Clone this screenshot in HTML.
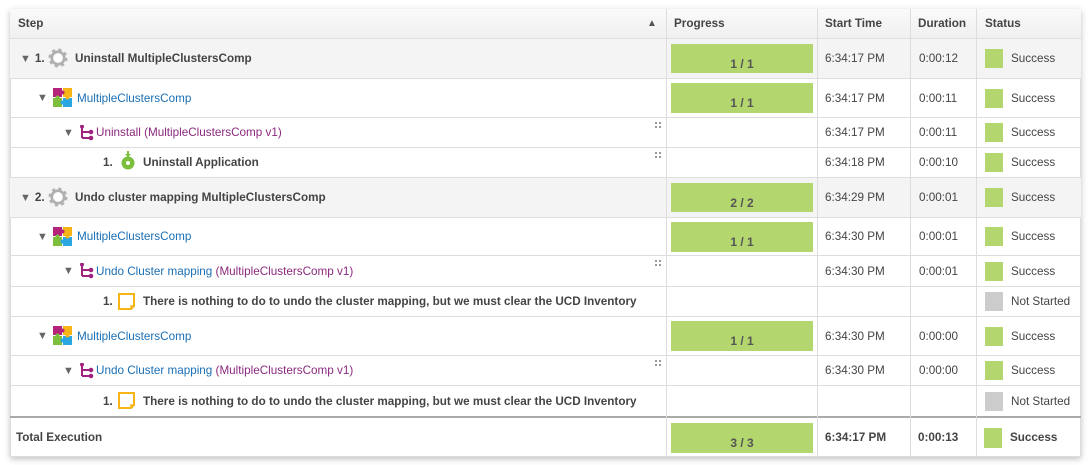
<!DOCTYPE html>
<html><head><meta charset="utf-8"><style>
*{margin:0;padding:0;box-sizing:border-box}
body{width:1090px;height:465px;background:#fff;font-family:"Liberation Sans",Arial,sans-serif;font-size:11.7px;color:#444;position:relative;overflow:hidden}
#t{position:absolute;left:10px;top:9px;width:1071px;height:448px;border:1px solid #ddd;box-shadow:0 2px 6px rgba(0,0,0,.25);background:#fff}
.r{position:absolute;left:10px;width:1071px;border-bottom:1px solid #ddd}
.g{background:#f4f4f4}
.c{position:absolute;top:0;height:100%;display:flex;align-items:center;white-space:nowrap}
.vl{position:absolute;top:9px;width:1px;height:448px;background:#ddd}
.b{font-weight:bold}
.pb{position:absolute;left:661px;width:142px;background:#b3d66f;text-align:center;font-weight:bold;color:#555;font-size:12px}
.sq{width:18px;height:19px;background:#b3d66f;margin-right:8px;display:inline-block}
.ns{background:#ccc}
.tri{font-size:11px;color:#666;margin-right:4px}
.blue{color:#1a6fb5}.pur{color:#8b2a7f}
.grip{position:absolute;left:645px;top:4px;width:6px;height:6px}
.grip i{position:absolute;width:2px;height:2px;background:#999}
</style></head><body>
<div id="t"></div>
<div class="r" style="top:9px;height:30px;background:linear-gradient(#fafafa,#f0f0f0)">
 <div class="c b" style="left:8px">Step</div>
 <div class="c" style="left:637px;font-size:10px;color:#555">▲</div>
 <div class="c b" style="left:664px">Progress</div>
 <div class="c b" style="left:815px">Start Time</div>
 <div class="c b" style="left:908px">Duration</div>
 <div class="c b" style="left:975px">Status</div>
</div>

<svg width="0" height="0" style="position:absolute">
<defs>
<g id="gear"><circle cx="10" cy="10" r="8" fill="none" stroke="#b0b0b0" stroke-width="3" stroke-dasharray="3 3.3"/><circle cx="10" cy="10" r="6.3" fill="none" stroke="#b0b0b0" stroke-width="2.6"/><circle cx="10" cy="10" r="4.2" fill="#fff"/></g>
<g id="puz"><rect x="0" y="0" width="9" height="9" fill="#b5227a"/><rect x="10" y="0" width="9" height="9" fill="#f6b417"/><rect x="0" y="10" width="9" height="9" fill="#7dbe3c"/><rect x="10" y="10" width="9" height="9" fill="#2aa7e0"/><circle cx="9.5" cy="4.5" r="2" fill="#b5227a"/><circle cx="4.5" cy="9.5" r="2" fill="#7dbe3c"/><circle cx="14.5" cy="9.5" r="2" fill="#f6b417"/><circle cx="9.5" cy="14.5" r="2" fill="#2aa7e0"/></g>
<g id="proc" fill="#a0237e" stroke="#a0237e"><line x1="2" y1="1" x2="2" y2="13" stroke-width="2"/><line x1="2" y1="7" x2="11" y2="7" stroke-width="2"/><line x1="2" y1="13" x2="11" y2="13" stroke-width="2"/><circle cx="2" cy="1.5" r="1.5"/><circle cx="11" cy="7" r="1.8"/><circle cx="11" cy="13" r="1.8"/></g>
<g id="uninst"><circle cx="8" cy="12" r="6.5" fill="#7cbf3d"/><circle cx="8" cy="12" r="2" fill="#fff"/><line x1="8" y1="0" x2="8" y2="5" stroke="#7cbf3d" stroke-width="2"/><path d="M5 3 L8 6.5 L11 3Z" fill="#7cbf3d"/></g>
<g id="note"><path d="M1 1 H16 V13 L13 16 H1 Z" fill="#fff" stroke="#f6b417" stroke-width="2"/><path d="M16 13 L13 13 L13 16" fill="none" stroke="#f6b417" stroke-width="1.5"/></g>
</defs></svg>

<div class="r g" style="top:39px;height:40px">
 <div class="c" style="left:10px"><span class="tri">▼</span><span class="b">1.</span></div>
 <svg style="position:absolute;left:38px;top:9px" width="20" height="20"><use href="#gear"/></svg>
 <div class="c b" style="left:65px">Uninstall MultipleClustersComp</div>
 <div class="pb" style="top:5px;height:29px;padding-top:13px">1 / 1</div>
 <div class="c" style="left:815px">6:34:17 PM</div><div class="c" style="left:909px">0:00:12</div>
 <div class="c" style="left:975px"><span class="sq"></span>Success</div>
</div>
<div class="r" style="top:79px;height:39px">
 <div class="c" style="left:27px"><span class="tri">▼</span></div>
 <svg style="position:absolute;left:43px;top:9px" width="19" height="19"><use href="#puz"/></svg>
 <div class="c blue" style="left:67px">MultipleClustersComp</div>
 <div class="pb" style="top:4px;height:30px;padding-top:13px">1 / 1</div>
 <div class="c" style="left:815px">6:34:17 PM</div><div class="c" style="left:909px">0:00:11</div>
 <div class="c" style="left:975px"><span class="sq"></span>Success</div>
</div>
<div class="r" style="top:118px;height:30px">
 <div class="c" style="left:53px"><span class="tri">▼</span></div>
 <svg style="position:absolute;left:70px;top:7px" width="14" height="16"><use href="#proc"/></svg>
 <div class="c pur" style="left:86px">Uninstall (MultipleClustersComp v1)</div>
 <div class="grip"><i style="left:0;top:0"></i><i style="left:4px;top:0"></i><i style="left:0;top:4px"></i><i style="left:4px;top:4px"></i></div>
 <div class="c" style="left:815px">6:34:17 PM</div><div class="c" style="left:909px">0:00:11</div>
 <div class="c" style="left:975px"><span class="sq"></span>Success</div>
</div>
<div class="r" style="top:148px;height:30px">
 <div class="c b" style="left:93px">1.</div>
 <svg style="position:absolute;left:110px;top:3px" width="16" height="20"><use href="#uninst"/></svg>
 <div class="c b" style="left:133px">Uninstall Application</div>
 <div class="grip"><i style="left:0;top:0"></i><i style="left:4px;top:0"></i><i style="left:0;top:4px"></i><i style="left:4px;top:4px"></i></div>
 <div class="c" style="left:815px">6:34:18 PM</div><div class="c" style="left:909px">0:00:10</div>
 <div class="c" style="left:975px"><span class="sq"></span>Success</div>
</div>
<div class="r g" style="top:178px;height:40px">
 <div class="c" style="left:10px"><span class="tri">▼</span><span class="b">2.</span></div>
 <svg style="position:absolute;left:38px;top:9px" width="20" height="20"><use href="#gear"/></svg>
 <div class="c b" style="left:65px">Undo cluster mapping MultipleClustersComp</div>
 <div class="pb" style="top:5px;height:29px;padding-top:13px">2 / 2</div>
 <div class="c" style="left:815px">6:34:29 PM</div><div class="c" style="left:909px">0:00:01</div>
 <div class="c" style="left:975px"><span class="sq"></span>Success</div>
</div>
<div class="r" style="top:218px;height:38px">
 <div class="c" style="left:27px"><span class="tri">▼</span></div>
 <svg style="position:absolute;left:43px;top:9px" width="19" height="19"><use href="#puz"/></svg>
 <div class="c blue" style="left:67px">MultipleClustersComp</div>
 <div class="pb" style="top:4px;height:30px;padding-top:13px">1 / 1</div>
 <div class="c" style="left:815px">6:34:30 PM</div><div class="c" style="left:909px">0:00:01</div>
 <div class="c" style="left:975px"><span class="sq"></span>Success</div>
</div>
<div class="r" style="top:256px;height:31px">
 <div class="c" style="left:53px"><span class="tri">▼</span></div>
 <svg style="position:absolute;left:70px;top:7px" width="14" height="16"><use href="#proc"/></svg>
 <div class="c" style="left:86px"><span class="blue">Undo Cluster mapping</span>&nbsp;<span class="pur">(MultipleClustersComp v1)</span></div>
 <div class="grip"><i style="left:0;top:0"></i><i style="left:4px;top:0"></i><i style="left:0;top:4px"></i><i style="left:4px;top:4px"></i></div>
 <div class="c" style="left:815px">6:34:30 PM</div><div class="c" style="left:909px">0:00:01</div>
 <div class="c" style="left:975px"><span class="sq"></span>Success</div>
</div>
<div class="r" style="top:287px;height:30px">
 <div class="c b" style="left:93px">1.</div>
 <svg style="position:absolute;left:108px;top:6px" width="18" height="18"><use href="#note"/></svg>
 <div class="c b" style="left:133px">There is nothing to do to undo the cluster mapping, but we must clear the UCD Inventory</div>
 <div class="c" style="left:975px"><span class="sq ns"></span>Not Started</div>
</div>
<div class="r" style="top:317px;height:39px">
 <div class="c" style="left:27px"><span class="tri">▼</span></div>
 <svg style="position:absolute;left:43px;top:9px" width="19" height="19"><use href="#puz"/></svg>
 <div class="c blue" style="left:67px">MultipleClustersComp</div>
 <div class="pb" style="top:4px;height:30px;padding-top:13px">1 / 1</div>
 <div class="c" style="left:815px">6:34:30 PM</div><div class="c" style="left:909px">0:00:00</div>
 <div class="c" style="left:975px"><span class="sq"></span>Success</div>
</div>
<div class="r" style="top:356px;height:30px">
 <div class="c" style="left:53px"><span class="tri">▼</span></div>
 <svg style="position:absolute;left:70px;top:7px" width="14" height="16"><use href="#proc"/></svg>
 <div class="c" style="left:86px"><span class="blue">Undo Cluster mapping</span>&nbsp;<span class="pur">(MultipleClustersComp v1)</span></div>
 <div class="grip"><i style="left:0;top:0"></i><i style="left:4px;top:0"></i><i style="left:0;top:4px"></i><i style="left:4px;top:4px"></i></div>
 <div class="c" style="left:815px">6:34:30 PM</div><div class="c" style="left:909px">0:00:00</div>
 <div class="c" style="left:975px"><span class="sq"></span>Success</div>
</div>
<div class="r" style="top:386px;height:30px;border-bottom:none">
 <div class="c b" style="left:93px">1.</div>
 <svg style="position:absolute;left:108px;top:6px" width="18" height="18"><use href="#note"/></svg>
 <div class="c b" style="left:133px">There is nothing to do to undo the cluster mapping, but we must clear the UCD Inventory</div>
 <div class="c" style="left:975px"><span class="sq ns"></span>Not Started</div>
</div>
<div class="r" style="top:416px;height:41px;border-top:2px solid #aaa;border-bottom:none">
 <div class="c b" style="left:6px">Total Execution</div>
 <div class="pb" style="top:5px;height:30px;padding-top:13px">3 / 3</div>
 <div class="c b" style="left:815px">6:34:17 PM</div><div class="c b" style="left:908px">0:00:13</div>
 <div class="c b" style="left:974px"><span class="sq" style="height:20px"></span>Success</div>
</div>
<div class="vl" style="left:666px"></div>
<div class="vl" style="left:817px"></div>
<div class="vl" style="left:910px"></div>
<div class="vl" style="left:976px"></div>
</body></html>
